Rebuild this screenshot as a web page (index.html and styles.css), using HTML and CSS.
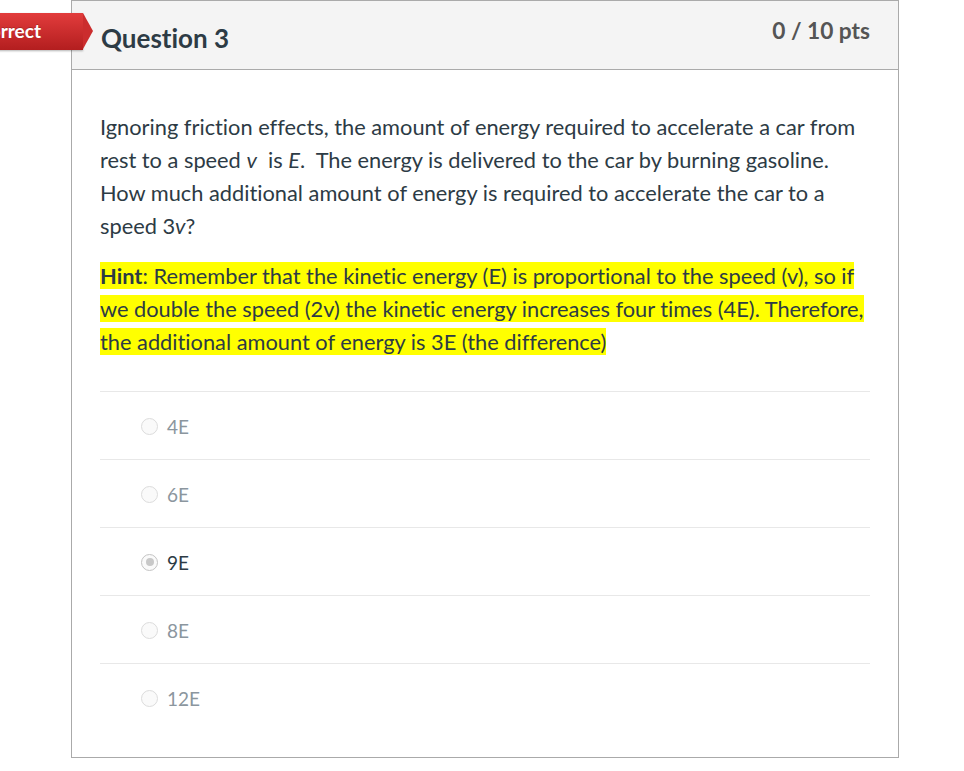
FILE: index.html
```html
<!DOCTYPE html>
<html>
<head>
<meta charset="utf-8">
<link rel="stylesheet" href="styles.css">
</head>
<body>
<div class="page">
  <div class="card">
    <div class="flag"><span class="flag-text">Incorrect</span></div>
    <div class="card-header">
      <h2 class="q-title">Question 3</h2>
      <div class="q-points">0 / 10 pts</div>
    </div>
    <div class="card-body">
      <p class="q-text">Ignoring friction effects, the amount of energy required to accelerate a car from rest to a speed <i>v</i>&nbsp; is <i>E</i>.&nbsp; The energy is delivered to the car by burning gasoline. How much additional amount of energy is required to accelerate the car to a speed 3<i>v</i>?</p>
      <p class="q-hint"><span class="hl"><b>Hint</b>: Remember that the kinetic energy (E) is proportional to the speed (v), so if we double the speed (2v) the kinetic energy increases four times (4E). Therefore, the additional amount of energy is 3E (the difference)</span></p>
      <div class="answers">
        <div class="answer"><span class="radio"></span><span class="ans-text">4E</span></div>
        <div class="answer"><span class="radio"></span><span class="ans-text">6E</span></div>
        <div class="answer selected"><span class="radio"></span><span class="ans-text">9E</span></div>
        <div class="answer"><span class="radio"></span><span class="ans-text">8E</span></div>
        <div class="answer"><span class="radio"></span><span class="ans-text">12E</span></div>
      </div>
    </div>
  </div>
</div>
</body>
</html>
```
FILE: styles.css
```css
html, body {
  margin: 0;
  padding: 0;
  background: #fff;
}
body {
  font-family: Lato, "Liberation Sans", sans-serif;
  color: #2d3b45;
  font-variant-ligatures: none;
}
.page {
  padding-left: 71px;
  width: 828px;
}
.card {
  position: relative;
  border: 1px solid #aaaaaa;
  box-sizing: border-box;
  width: 828px;
  height: 758px;
}
.flag {
  position: absolute;
  left: -131px;
  top: 12px;
  height: 37px;
  width: 142px;
  background: linear-gradient(#e23c3c, #b31e1f);
  display: flex;
  align-items: center;
  justify-content: flex-end;
  padding-right: 42px;
  box-sizing: border-box;
  box-shadow: 0 1px 2px rgba(0,0,0,0.3);
}
.flag::after {
  content: "";
  position: absolute;
  right: -10px;
  top: 0;
  border-left: 10px solid #cb2d2e;
  border-top: 18.5px solid transparent;
  border-bottom: 18.5px solid transparent;
}
.flag-text {
  color: #fff;
  font-weight: 700;
  font-size: 19px;
  margin-top: -2px;
  text-shadow: 0 -1px 0 rgba(0,0,0,0.2);
}
.card-header {
  height: 68px;
  background: #f4f4f4;
  border-bottom: 1px solid #aaaaaa;
  display: flex;
  justify-content: space-between;
  align-items: center;
  padding: 0 28px 0 29px;
}
.q-title {
  margin: 6px 0 0 0;
  font-size: 26px;
  font-weight: 700;
  color: #2d3b45;
}
.q-points {
  font-size: 22.7px;
  font-weight: 700;
  color: #555555;
  margin-top: -9px;
}
.card-body {
  padding: 40px 28px 0 28px;
}
.q-text, .q-hint {
  margin: 0;
  font-size: 21.8px;
  line-height: 33px;
}
.q-hint {
  margin-top: 17px;
}
.hl {
  background: #ffff00;
}
.answers {
  margin-top: 33px;
}
.answer {
  border-top: 1px solid #e8e8e8;
  height: 66px;
  display: flex;
  align-items: center;
  padding-left: 41px;
  padding-top: 1px;
  box-sizing: content-box;
}
.radio {
  width: 17px;
  height: 17px;
  border-radius: 50%;
  border: 1px solid #dcdcdc;
  background: #fafafa;
  box-sizing: border-box;
  margin-right: 9px;
  position: relative;
}
.answer.selected .radio {
  border-color: #c4c4c4;
}
.answer.selected .radio::after {
  content: "";
  position: absolute;
  left: 3.5px;
  top: 3.5px;
  width: 8px;
  height: 8px;
  border-radius: 50%;
  background: #c8c8c8;
}
.ans-text {
  font-size: 19px;
  color: #8b969e;
}
.answer.selected .ans-text {
  color: #2d3b45;
}
```
